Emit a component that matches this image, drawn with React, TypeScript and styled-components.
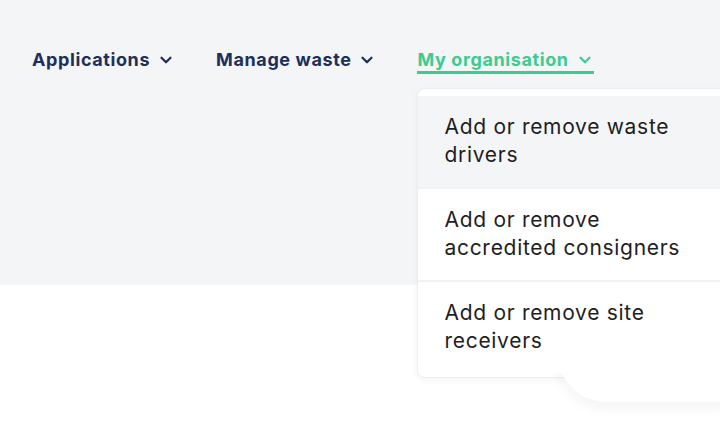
import styled, { createGlobalStyle } from "styled-components";
import { ChevronDown } from "lucide-react";

const GlobalStyle = createGlobalStyle`
  html, body {
    margin: 0;
    padding: 0;
    background: #ffffff;
    font-family: Inter, "Noto Sans", sans-serif;
  }
  * { box-sizing: border-box; }
`;

const Page = styled.div`
  width: 720px;
  height: 437px;
  overflow: hidden;
  background: #ffffff;
`;

const Header = styled.header`
  height: 285px;
  background: #f4f5f7;
  padding: 49px 0 0 32px;
`;

const Nav = styled.nav`
  display: flex;
  align-items: flex-start;
  gap: 41px;
`;

const NavItem = styled.div<{ $active?: boolean }>`
  position: relative;
  display: flex;
  align-items: center;
  gap: 7px;
  height: 25px;
  padding-bottom: 1px;
  font-size: 18px;
  font-weight: 700;
  letter-spacing: 0.6px;
  color: ${(p) => (p.$active ? "#3ecb8f" : "#1e3059")};
  border-bottom: 3px solid ${(p) => (p.$active ? "#3ecb8f" : "transparent")};
  cursor: pointer;
`;

const Dropdown = styled.ul`
  position: absolute;
  top: 39px;
  left: 0;
  width: 312px;
  margin: 0;
  padding: 7px 0 4px;
  list-style: none;
  background: #ffffff;
  border: 1px solid #eceef1;
  border-radius: 8px;
  box-shadow: 0 2px 6px rgba(30, 40, 70, 0.05);
  z-index: 2;
  letter-spacing: 0;

  &::after {
    content: "";
    position: absolute;
    left: 140px;
    right: 0;
    top: 120px;
    bottom: -25px;
    background: #ffffff;
    border-bottom-left-radius: 48px;
    box-shadow: 0 6px 14px rgba(30, 40, 70, 0.05);
    z-index: -1;
  }
`;

const DropdownItem = styled.li<{ $hover?: boolean }>`
  padding: 17px 26px 18px;
  min-height: 91px;
  font-size: 21px;
  font-weight: 400;
  letter-spacing: 0.7px;
  line-height: 28px;
  color: #1e1e24;
  background: ${(p) => (p.$hover ? "#f4f5f7" : "#ffffff")};
  & + & {
    border-top: 2px solid #f1f2f4;
  }
`;

const navItems = ["Applications", "Manage waste"];
const orgLinks = [
  "Add or remove waste drivers",
  "Add or remove accredited consigners",
  "Add or remove site receivers",
];

export default function App() {
  return (
    <Page>
      <GlobalStyle />
      <Header>
        <Nav>
          {navItems.map((label) => (
            <NavItem key={label}>
              {label}
              <ChevronDown size={18} strokeWidth={3} />
            </NavItem>
          ))}
          <NavItem $active>
            My organisation
            <ChevronDown size={18} strokeWidth={3} />
            <Dropdown>
              {orgLinks.map((label, i) => (
                <DropdownItem key={label} $hover={i === 0}>
                  {label}
                </DropdownItem>
              ))}
            </Dropdown>
          </NavItem>
        </Nav>
      </Header>
    </Page>
  );
}
